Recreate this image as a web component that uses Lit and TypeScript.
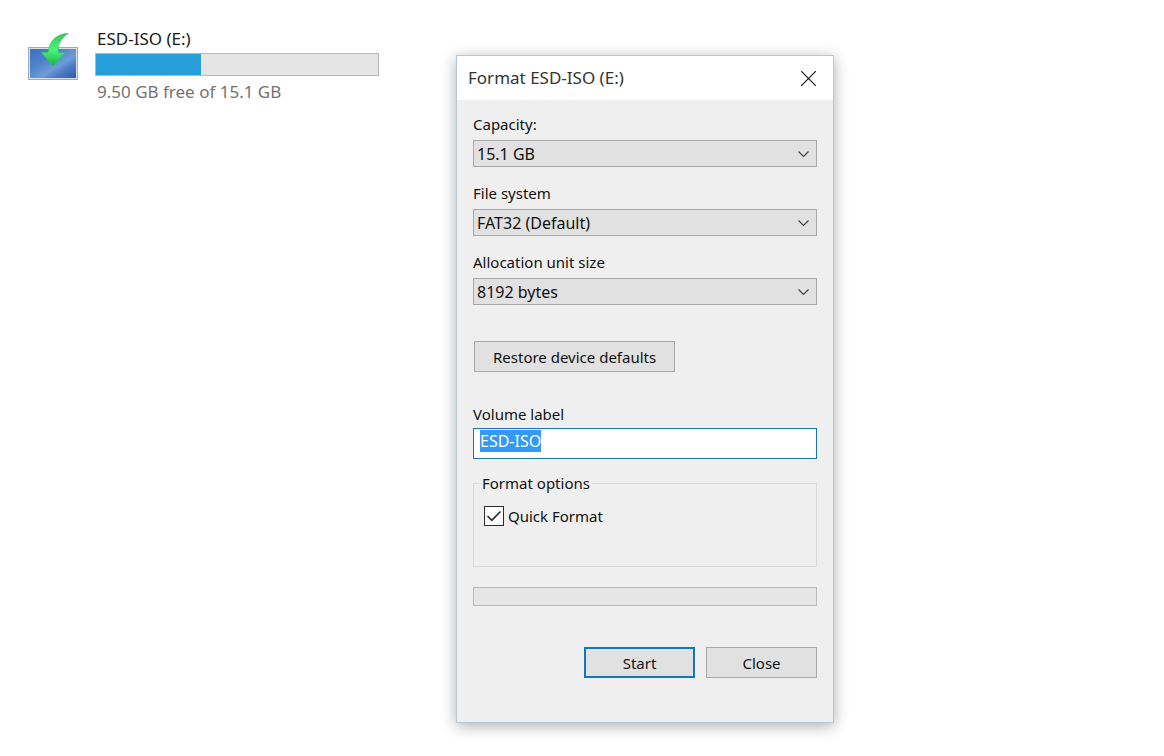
import { LitElement, html, css, svg } from "lit";
import { customElement, property, state, query } from "lit/decorators.js";

@customElement("drive-tile")
class DriveTile extends LitElement {
  @property() name = "";
  @property({ type: Number }) free = 0;
  @property({ type: Number }) total = 1;

  static styles = css`
    :host {
      display: grid;
      grid-template-columns: 50px minmax(0, 1fr);
      column-gap: 17px;
      align-items: start;
      font-size: 17px;
      line-height: 24px;
      color: #1a1a1a;
    }
    .icon {
      display: block;
      width: 50px;
      height: 50px;
      margin-top: 5px;
    }
    .name,
    .space {
      padding-left: 2px;
    }
    .space {
      color: #737373;
    }
    .bar {
      box-sizing: border-box;
      height: 23px;
      margin: 2px 0 4px;
      border: 1px solid #b7b7b7;
      background: #e5e5e5;
    }
    .used {
      height: 100%;
      background: #269fdb;
    }
  `;

  render() {
    const used = ((this.total - this.free) / this.total) * 100;
    return html`
      <svg class="icon" viewBox="0 0 50 50" aria-hidden="true">
        <defs>
          <linearGradient id="screen" x1="0" y1="0" x2="1" y2="1">
            <stop offset="0" stop-color="#3c6fc0" />
            <stop offset="0.35" stop-color="#4f82cc" />
            <stop offset="0.6" stop-color="#6f9cd9" />
            <stop offset="0.75" stop-color="#4c7cc5" />
            <stop offset="1" stop-color="#2f5ba9" />
          </linearGradient>
          <linearGradient id="arrow" x1="0" y1="0" x2="0" y2="1">
            <stop offset="0" stop-color="#3cc45c" />
            <stop offset="0.5" stop-color="#4df27a" />
            <stop offset="1" stop-color="#18b445" />
          </linearGradient>
        </defs>
        <rect x="0.5" y="15.500" width="49" height="32" fill="#dce1e6" stroke="#a3abb3" />
        <rect x="2" y="17" width="46" height="29" fill="url(#screen)" />
        <path
          d="M40.500 1.300C29 1.300 21 9 20 20.500L13 20.200L25.200 34L37 20.800L30.500 20.500C29.500 13 33 6 40.500 1.300Z"
          fill="url(#arrow)"
          stroke="#2cc458"
          stroke-width="0.5"
        />
      </svg>
      <div>
        <div class="name">${this.name}</div>
        <div class="bar"><div class="used" style="width:${used.toFixed(1)}%"></div></div>
        <div class="space">${this.free.toFixed(2)} GB free of ${this.total} GB</div>
      </div>
    `;
  }
}

interface Field {
  id: string;
  label: string;
  options: string[];
}

const FIELDS: Field[] = [
  { id: "capacity", label: "Capacity:", options: ["15.1 GB"] },
  { id: "filesystem", label: "File system", options: ["FAT32 (Default)"] },
  { id: "allocation", label: "Allocation unit size", options: ["8192 bytes"] },
];

@customElement("format-dialog")
class FormatDialog extends LitElement {
  @property() drive = "";
  @state() private quick = true;
  @query("#volume") private volume!: HTMLInputElement;

  static styles = css`
    :host {
      display: block;
      box-sizing: border-box;
      border: 1px solid #b4c8d8;
      background: #efefef;
      box-shadow: 0 3px 14px rgba(0, 0, 0, 0.32);
      font-size: 15px;
      line-height: 20px;
      color: #111;
    }
    * {
      box-sizing: border-box;
    }
    button,
    input,
    select {
      margin: 0;
      border-radius: 0;
      font: inherit;
      color: inherit;
      outline: none;
    }
    .titlebar {
      display: flex;
      align-items: center;
      justify-content: space-between;
      height: 44px;
      padding-left: 11px;
      background: #fff;
    }
    .title {
      margin: 0;
      font-size: 17px;
      font-weight: 400;
      color: #333;
    }
    .dismiss {
      display: grid;
      place-items: center;
      width: 49px;
      height: 44px;
      padding: 0;
      border: 0;
      background: none;
    }
    .body {
      display: flex;
      flex-direction: column;
      padding: 14px 16px 44px;
    }
    .fields {
      display: grid;
      gap: 16px;
    }
    .field {
      display: grid;
      gap: 6px;
    }
    .combo {
      display: grid;
      align-items: center;
    }
    .combo > * {
      grid-area: 1 / 1;
    }
    .combo svg {
      justify-self: end;
      margin-right: 7px;
      pointer-events: none;
    }
    select {
      appearance: none;
      width: 100%;
      height: 27px;
      padding: 0 24px 0 3px;
      border: 1px solid #a8a8a8;
      background: #e1e1e1;
      font-size: 16px;
    }
    .push {
      height: 31px;
      padding: 0 18px;
      border: 1px solid #a8a8a8;
      background: #e1e1e1;
    }
    .restore {
      align-self: flex-start;
      margin: 36px 0 32px 1px;
    }
    .volume {
      display: grid;
      gap: 4px;
    }
    .text {
      width: 100%;
      height: 31px;
      padding: 2px 6px 7px;
      border: 1px solid #1878b0;
      background: #fff;
      font-size: 16px;
      line-height: 20px;
    }
    .text::selection {
      background: #3399f5;
      color: #fff;
    }
    fieldset {
      min-width: 0;
      height: 94px;
      margin: 14px 0 0;
      padding: 13px 10px 0 6px;
      border: 1px solid #dadada;
    }
    legend {
      padding: 0 2px;
    }
    .check {
      display: inline-flex;
      align-items: center;
      gap: 4px;
      padding-left: 4px;
    }
    .box {
      display: grid;
    }
    .box > * {
      grid-area: 1 / 1;
      pointer-events: none;
    }
    .box input {
      appearance: none;
      width: 20px;
      height: 20px;
      border: 1px solid #2b2b2b;
      background: #fff;
      pointer-events: auto;
    }
    .progress {
      height: 19px;
      margin-top: 20px;
      border: 1px solid #b9b9b9;
      background: #e6e6e6;
    }
    .actions {
      display: flex;
      justify-content: flex-end;
      gap: 11px;
      margin-top: 41px;
    }
    .actions .push {
      width: 111px;
    }
    .actions .primary {
      border: 2px solid #1876b4;
    }
  `;

  firstUpdated() {
    this.volume.focus();
    this.volume.select();
  }

  private renderField(field: Field) {
    return html`
      <div class="field">
        <label for=${field.id}>${field.label}</label>
        <div class="combo">
          <select id=${field.id}>
            ${field.options.map((option) => html`<option>${option}</option>`)}
          </select>
          <svg width="13" height="8" viewBox="0 0 13 8" aria-hidden="true">
            <path d="M1.500 1.500L6.500 6.500L11.500 1.500" fill="none" stroke="#444" stroke-width="1.200" />
          </svg>
        </div>
      </div>
    `;
  }

  render() {
    return html`
      <header class="titlebar">
        <h1 class="title">Format ${this.drive}</h1>
        <button class="dismiss" aria-label="Close window">
          <svg width="15" height="15" viewBox="0 0 15 15" aria-hidden="true">
            <path d="M0 0L15 15M15 0L0 15" fill="none" stroke="#111" stroke-width="1.100" />
          </svg>
        </button>
      </header>
      <div class="body">
        <div class="fields">${FIELDS.map((field) => this.renderField(field))}</div>
        <button class="push restore">Restore device defaults</button>
        <div class="volume">
          <label for="volume">Volume label</label>
          <input class="text" id="volume" type="text" value="ESD-ISO" spellcheck="false" />
        </div>
        <fieldset>
          <legend>Format options</legend>
          <label class="check">
            <span class="box">
              <input
                type="checkbox"
                .checked=${this.quick}
                @change=${(e: Event) => (this.quick = (e.target as HTMLInputElement).checked)}
              />
              <svg width="20" height="20" viewBox="0 0 20 20" aria-hidden="true">
                ${this.quick
                  ? svg`<path d="M3.500 10L7.800 14.300L16.500 5.500" fill="none" stroke="#2b2b2b" stroke-width="1.700" />`
                  : ""}
              </svg>
            </span>
            Quick Format
          </label>
        </fieldset>
        <div class="progress" role="progressbar" aria-label="Format progress" aria-valuenow="0"></div>
        <div class="actions">
          <button class="push primary">Start</button>
          <button class="push">Close</button>
        </div>
      </div>
    `;
  }
}

@customElement("app-root")
class AppRoot extends LitElement {
  static styles = css`
    :host {
      display: flex;
      align-items: flex-start;
      gap: 77px;
      box-sizing: border-box;
      min-height: 100vh;
      padding: 27px 28px 33px;
      background: #fff;
      font-family: "Noto Sans", "Open Sans", sans-serif;
    }
    drive-tile {
      flex: 0 1 351px;
    }
    format-dialog {
      flex: 0 1 378px;
      margin-top: 28px;
    }
  `;

  render() {
    return html`
      <drive-tile name="ESD-ISO (E:)" .free=${9.5} .total=${15.1}></drive-tile>
      <format-dialog drive="ESD-ISO (E:)"></format-dialog>
    `;
  }
}
